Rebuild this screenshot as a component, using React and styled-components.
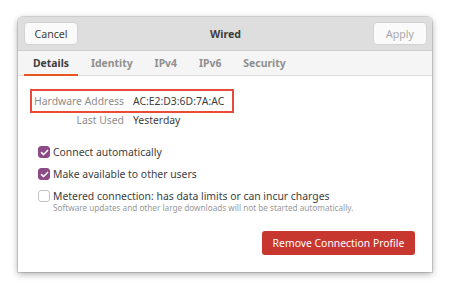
import React from 'react';
import styled, { createGlobalStyle } from 'styled-components';

const Global = createGlobalStyle`
  body {
    margin: 0;
    background: #fff;
    font-family: "Noto Sans", "Open Sans", sans-serif;
  }
`

const Page = styled.div`
  width: 450px;
  height: 293px;
  padding: 17px 0 0 18px;
  box-sizing: border-box;
`

const Window = styled.div`
  width: 414px;
  height: 255px;
  border-radius: 5px 5px 0 0;
  background: #fff;
  box-shadow: 0 2px 7px rgba(0, 0, 0, 0.35), 0 0 0 1px rgba(0, 0, 0, 0.12);
  display: flex;
  flex-direction: column;
  overflow: hidden;
`

const HeaderBar = styled.div`
  height: 33px;
  background: #dedede;
  border-bottom: 1px solid #cdcdcd;
  display: flex;
  align-items: center;
  justify-content: space-between;
  padding: 0 5px 0 6px;
`

const HeaderButton = styled.button`
  height: 23px;
  width: ${p => p.w}px;
  border: 1px solid #d2d2d2;
  border-radius: 4px;
  background: #fafafa;
  font-family: inherit;
  font-size: 10.6px;
  color: ${p => (p.disabled ? '#a9a9a9' : '#3d3d3d')};
  padding: 0;
`

const Title = styled.div`
  flex: 1;
  text-align: center;
  font-weight: 700;
  font-size: 10.6px;
  color: #3d3d3d;
`

const TabBar = styled.div`
  height: 24px;
  background: #f5f5f5;
  border-bottom: 1px solid #dcdcdc;
  display: flex;
  padding-left: 6px;
  gap: 4px;
`

const Tab = styled.div`
  padding: 0 9px;
  display: flex;
  align-items: center;
  font-size: 10.4px;
  font-weight: 700;
  color: ${p => (p.active ? '#3d3d3d' : '#8f8f8f')};
  border-bottom: 2px solid ${p => (p.active ? '#e95420' : 'transparent')};
  box-sizing: border-box;
  margin-bottom: -1px;
`

const Body = styled.div`
  flex: 1;
  display: flex;
  flex-direction: column;
  padding: 13px 17px 17px 12px;
`

const InfoRow = styled.div`
  display: grid;
  grid-template-columns: 92px auto;
  column-gap: 9px;
  align-items: center;
  height: ${p => (p.highlight ? 20 : 14)}px;
  width: ${p => (p.highlight ? '200px' : 'auto')};
  border: ${p => (p.highlight ? '2px solid #ea4a3a' : 'none')};
  padding-left: ${p => (p.highlight ? 0 : 2)}px;
  font-size: 10.4px;
  white-space: nowrap;
`

const Label = styled.span`
  text-align: right;
  color: #8c8c8c;
`

const Value = styled.span`
  color: #3d3d3d;
`

const Checks = styled.div`
  margin-top: 18px;
  margin-left: 8px;
  display: flex;
  flex-direction: column;
  gap: 8px;
`

const CheckRow = styled.div`
  display: flex;
  align-items: flex-start;
  gap: 3px;
`

const Box = styled.span`
  width: 12px;
  height: 12px;
  margin-top: 1px;
  border-radius: 3px;
  box-sizing: border-box;
  flex: none;
  display: flex;
  align-items: center;
  justify-content: center;
  background: ${p => (p.checked ? '#8c4a87' : '#fff')};
  border: 1px solid ${p => (p.checked ? '#8c4a87' : '#c4c4c4')};
`

const CheckText = styled.div`
  display: flex;
  flex-direction: column;
`

const CheckLabel = styled.span`
  font-size: 10.4px;
  line-height: 14px;
  color: #3d3d3d;
`

const Hint = styled.span`
  font-size: 8.2px;
  line-height: 10px;
  color: #9a9a9a;
`

const Footer = styled.div`
  margin-top: auto;
  display: flex;
  justify-content: flex-end;
`

const DangerButton = styled.button`
  height: 24px;
  width: 153px;
  border: none;
  border-radius: 3px;
  background: #c7362f;
  color: #fff;
  font-family: inherit;
  font-size: 10.4px;
  padding: 0;
`

const Tick = () => (
  <svg width="9" height="9" viewBox="0 0 9 9">
    <path d="M1.5 4.6 L3.6 6.6 L7.6 2.4" fill="none" stroke="#fff" strokeWidth="1.5" strokeLinecap="round" strokeLinejoin="round" />
  </svg>
)

function Check({ checked, label, hint }) {
  return (
    <CheckRow>
      <Box checked={checked}>{checked && <Tick />}</Box>
      <CheckText>
        <CheckLabel>{label}</CheckLabel>
        {hint && <Hint>{hint}</Hint>}
      </CheckText>
    </CheckRow>
  )
}

export default function App() {
  return (
    <Page>
      <Global />
      <Window>
        <HeaderBar>
          <HeaderButton w={54}>Cancel</HeaderButton>
          <Title>Wired</Title>
          <HeaderButton w={54} disabled>Apply</HeaderButton>
        </HeaderBar>
        <TabBar>
          <Tab active>Details</Tab>
          <Tab>Identity</Tab>
          <Tab>IPv4</Tab>
          <Tab>IPv6</Tab>
          <Tab>Security</Tab>
        </TabBar>
        <Body>
          <InfoRow highlight>
            <Label>Hardware Address</Label>
            <Value>AC:E2:D3:6D:7A:AC</Value>
          </InfoRow>
          <InfoRow>
            <Label>Last Used</Label>
            <Value>Yesterday</Value>
          </InfoRow>
          <Checks>
            <Check checked label="Connect automatically" />
            <Check checked label="Make available to other users" />
            <Check
              label="Metered connection: has data limits or can incur charges"
              hint="Software updates and other large downloads will not be started automatically."
            />
          </Checks>
          <Footer>
            <DangerButton>Remove Connection Profile</DangerButton>
          </Footer>
        </Body>
      </Window>
    </Page>
  )
}
